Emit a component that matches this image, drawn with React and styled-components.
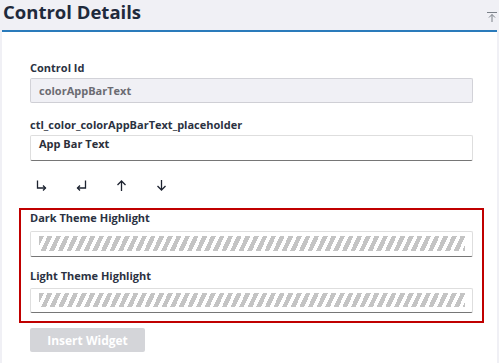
import React from "react";
import styled, { createGlobalStyle } from "styled-components";

const GlobalStyle = createGlobalStyle`
  html, body {
    margin: 0;
    padding: 0;
    background: #f0f0f5;
    font-family: "Open Sans", "Liberation Sans", sans-serif;
  }
`;

const Page = styled.div`
  width: 499px;
  height: 363px;
  padding: 0 2px;
  box-sizing: border-box;
  overflow: hidden;
`;

const Header = styled.div`
  height: 30px;
  display: flex;
  justify-content: space-between;
  align-items: flex-start;
  border-bottom: 2px solid #2a7bbb;
`;

const Title = styled.h2`
  margin: 0;
  padding-left: 1px;
  font-size: 18.5px;
  line-height: 24px;
  font-weight: 700;
  color: #1f2a3c;
`;

const PinButton = styled.button`
  border: none;
  background: none;
  padding: 0;
  margin-top: 11px;
  width: 10px;
  height: 11px;
  display: flex;
  cursor: pointer;
`;

const Panel = styled.div`
  background: #fff;
  height: 331px;
  padding: 29px 24px 0 28px;
  box-sizing: border-box;
`;

const Label = styled.label`
  display: block;
  font-size: 11px;
  line-height: 14px;
  font-weight: 700;
  color: #2b3242;
  margin-top: ${(p) => p.$top || 0}px;
  margin-bottom: ${(p) => p.$gap || 3}px;
`;

const Input = styled.div`
  height: ${(p) => p.$h || 26}px;
  box-sizing: border-box;
  border: 1px solid ${(p) => (p.$disabled ? "#d2d2d8" : "#dedede")};
  border-bottom-color: ${(p) => (p.$disabled ? "#cfcfd5" : "#767676")};
  border-radius: 2px;
  background: ${(p) => (p.$disabled ? "#f0f0f5" : "#fff")};
  padding: ${(p) => (p.$disabled ? "5px 8px" : "1px 8px")};
  font-size: 11px;
  line-height: 14px;
  font-weight: 700;
  color: ${(p) => (p.$disabled ? "#6b6b72" : "#2b2f3a")};
`;

// hatched swatch shown when no colour is set
const Stripes = styled.div`
  height: 100%;
  background: repeating-linear-gradient(
    115deg,
    #c4c4c4 0 4.3px,
    transparent 4.3px 7.8px
  );
`;

const ColorInput = styled(Input)`
  padding: 4px 7px 5px 8px;
`;

const IconRow = styled.div`
  display: flex;
  gap: 29px;
  margin: 19px 0 0 6px;
  height: 12px;
`;

const IconButton = styled.button`
  border: none;
  background: none;
  padding: 0;
  width: 11px;
  height: 11px;
  display: flex;
  cursor: pointer;
`;

const Highlight = styled.div`
  margin: 16px -11px 0;
  border: 2px solid #c00000;
  padding: 1px 9px 8px;
`;

const InsertButton = styled.button`
  margin-top: 5px;
  width: 115px;
  height: 24px;
  border: none;
  border-radius: 2px;
  background: #d4d5d9;
  color: #fff;
  font-family: "Open Sans", "Liberation Sans", sans-serif;
  font-size: 12px;
  font-weight: 700;
  padding: 0;
`;

const Icon = ({ children }) => (
  <svg
    width="11"
    height="11"
    viewBox="0 0 11 11"
    fill="none"
    stroke="#1d2330"
    strokeWidth="1.3"
  >
    {children}
  </svg>
);

const App = () => {
  return (
    <Page>
      <GlobalStyle />
      <Header>
        <Title>Control Details</Title>
        <PinButton>
          <svg width="10" height="11" viewBox="0 0 10 11" fill="none" stroke="#7a8088" strokeWidth="1">
            <path d="M0 1.5h10" />
            <path d="M5 3.5v7.5M2 6.5l3-3 3 3" />
          </svg>
        </PinButton>
      </Header>
      <Panel>
        <Label>Control Id</Label>
        <Input $disabled $h={25}>colorAppBarText</Input>
        <Label $top={15}>ctl_color_colorAppBarText_placeholder</Label>
        <Input>App Bar Text</Input>
        <IconRow>
          <IconButton>
            <Icon>
              <path d="M1.5 0.5v7.5h8" />
              <path d="M7 5.5l2.5 2.5L7 10.5" />
            </Icon>
          </IconButton>
          <IconButton>
            <Icon>
              <path d="M9.5 0.5v7.5h-8" />
              <path d="M4 5.5L1.5 8 4 10.5" />
            </Icon>
          </IconButton>
          <IconButton>
            <Icon>
              <path d="M5.5 1v10M1.5 5l4-4 4 4" />
            </Icon>
          </IconButton>
          <IconButton>
            <Icon>
              <path d="M5.5 0v10M1.5 6l4 4 4-4" />
            </Icon>
          </IconButton>
        </IconRow>
        <Highlight>
          <Label $gap={6}>Dark Theme Highlight</Label>
          <ColorInput>
            <Stripes />
          </ColorInput>
          <Label $top={12} $gap={5}>Light Theme Highlight</Label>
          <ColorInput $h={25}>
            <Stripes />
          </ColorInput>
        </Highlight>
        <InsertButton disabled>Insert Widget</InsertButton>
      </Panel>
    </Page>
  );
};

export default App;
